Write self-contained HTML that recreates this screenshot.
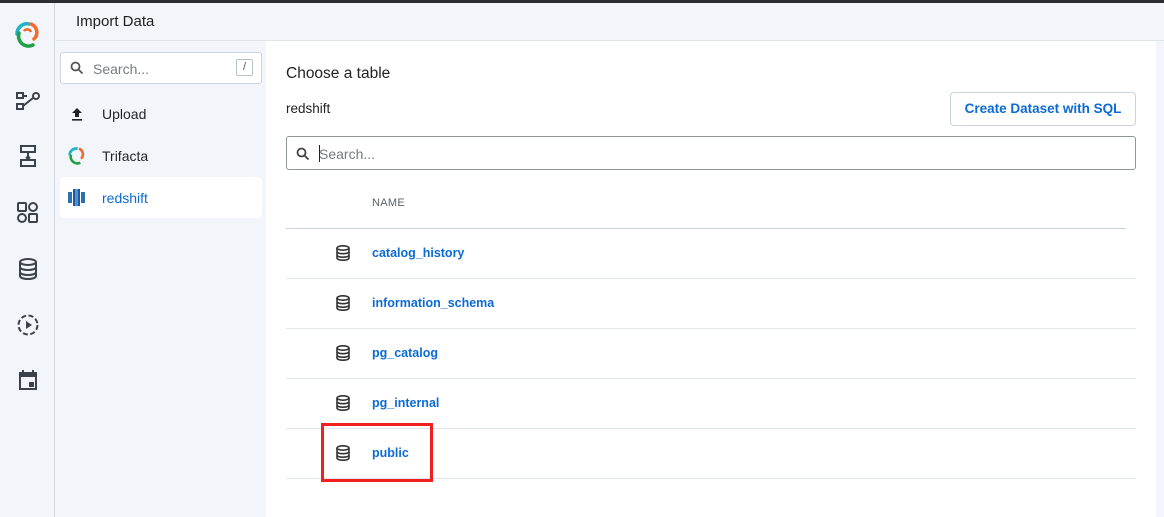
<!DOCTYPE html>
<html><head><meta charset="utf-8"><style>
*{box-sizing:border-box;margin:0;padding:0}
body{width:1164px;height:517px;overflow:hidden;background:#f2f6fa;font-family:"Liberation Sans",sans-serif;position:relative;color:#1f2328}
.a{position:absolute}
.topbar{left:0;top:0;width:1164px;height:3px;background:#2b2f33}
.side{left:0;top:3px;width:55px;height:514px;background:#f2f6fa;border-right:1px solid #d2d8de}
.hdr{left:56px;top:3px;width:1108px;height:38px;border-bottom:1px solid #dde4eb}
.main{left:266px;top:41px;width:890px;height:476px;background:#fff}
.row{left:286px;width:850px;height:50px;border-top:1px solid #dde6ef}
.lnk{color:#0b6bd6;font-weight:bold;font-size:12.5px}
svg{position:absolute}
</style></head><body>
<div class="a topbar"></div>
<div class="a side"></div>
<div class="a hdr"></div>
<div class="a" style="left:76px;top:13px;font-size:15px;color:#222">Import Data</div>
<svg style="left:13px;top:20px" width="30" height="30" viewBox="0 0 30 30">
<path d="M4 14 A10 10 0 0 1 16 4" stroke="#20b3c8" stroke-width="3.5" fill="none" stroke-linecap="round"/>
<path d="M18 4 A9 9 0 0 1 21 19" stroke="#f26a2e" stroke-width="3.5" fill="none" stroke-linecap="round"/>
<path d="M20 25 A10 10 0 0 1 6 13" stroke="#23a047" stroke-width="3.5" fill="none" stroke-linecap="round"/>
<path d="M11 11 A4 4 0 0 1 18 12" stroke="#f26a2e" stroke-width="2.5" fill="none"/>
</svg>
<svg style="left:16px;top:90px" width="24" height="22" viewBox="0 0 24 22" fill="none" stroke="#3c4249" stroke-width="2"><rect x="1" y="3" width="6" height="5"/><rect x="1" y="14" width="6" height="5"/><circle cx="20" cy="6" r="3"/><path d="M7 6h4M7 16l10-8"/></svg>
<svg style="left:19px;top:145px" width="18" height="24" viewBox="0 0 18 24" fill="none" stroke="#3c4249" stroke-width="2"><rect x="2" y="1" width="14" height="6"/><rect x="2" y="15" width="14" height="6"/><path d="M9 8v6M7 12l2 2 2-2"/></svg>
<svg style="left:17px;top:202px" width="22" height="22" viewBox="0 0 22 22" fill="none" stroke="#3c4249" stroke-width="2"><rect x="1" y="1" width="8" height="8" rx="1"/><circle cx="16" cy="5" r="4"/><circle cx="5" cy="16" r="4"/><rect x="12" y="12" width="8" height="8" rx="1"/></svg>
<svg style="left:18px;top:258px" width="20" height="22" viewBox="0 0 20 22" fill="none" stroke="#3c4249" stroke-width="2"><ellipse cx="10" cy="4" rx="8" ry="3"/><path d="M2 4v14c0 2 4 3 8 3s8-1 8-3V4M2 9c0 2 4 3 8 3s8-1 8-3M2 14c0 2 4 3 8 3s8-1 8-3"/></svg>
<svg style="left:17px;top:314px" width="22" height="22" viewBox="0 0 22 22"><circle cx="11" cy="11" r="9.5" fill="none" stroke="#3c4249" stroke-width="2" stroke-dasharray="5 2.5"/><path d="M9 7l6 4-6 4z" fill="#3c4249"/></svg>
<svg style="left:19px;top:370px" width="18" height="20" viewBox="0 0 18 20"><path d="M4 0v3M14 0v3" stroke="#3c4249" stroke-width="2"/><rect x="1" y="3" width="16" height="16" fill="none" stroke="#3c4249" stroke-width="2"/><rect x="1" y="3" width="16" height="4" fill="#3c4249"/><rect x="10" y="12" width="5" height="5" fill="#3c4249"/></svg>
<div class="a" style="left:60px;top:52px;width:202px;height:32px;background:#fff;border:1px solid #cfd6dd;border-radius:3px"></div>
<svg style="left:70px;top:61px" width="14" height="14" viewBox="0 0 14 14" fill="none" stroke="#555" stroke-width="1.8"><circle cx="5.5" cy="5.5" r="4"/><path d="M8.5 8.5l4 4"/></svg>
<div class="a" style="left:93px;top:61px;font-size:14px;color:#757b82">Search...</div>
<div class="a" style="left:236px;top:59px;width:17px;height:17px;border:1px solid #b8c0c8;border-radius:2px;font-size:11px;color:#555;text-align:center;line-height:15px">/</div>
<svg style="left:70px;top:107px" width="14" height="14" viewBox="0 0 14 14"><path d="M7 1L2 6h3v4h4V6h3z M2 12h10v1.6H2z" fill="#1f2328"/></svg>
<div class="a" style="left:102px;top:106px;font-size:14px">Upload</div>
<svg style="left:67px;top:146px" width="20" height="20" viewBox="0 0 30 30"><path d="M4 14 A10 10 0 0 1 16 4" stroke="#20b3c8" stroke-width="4" fill="none"/><path d="M18 4 A9 9 0 0 1 21 19" stroke="#f26a2e" stroke-width="4" fill="none"/><path d="M20 25 A10 10 0 0 1 6 13" stroke="#23a047" stroke-width="4" fill="none"/></svg>
<div class="a" style="left:102px;top:148px;font-size:14px">Trifacta</div>
<div class="a" style="left:60px;top:177px;width:202px;height:41px;background:#fff;border-radius:4px"></div>
<svg style="left:68px;top:189px" width="17" height="17" viewBox="0 0 17 17"><rect x="0" y="3" width="4" height="11" fill="#2c6fb3"/><rect x="5" y="0" width="7" height="17" fill="#1e5a9e"/><rect x="13" y="3" width="4" height="11" fill="#2c6fb3"/><rect x="7" y="0" width="3" height="17" fill="#4f93d6"/></svg>
<div class="a" style="left:102px;top:190px;font-size:14px;color:#0b6bd6">redshift</div>
<div class="a main"></div>
<div class="a" style="left:286px;top:65px;font-size:15.5px;color:#222">Choose a table</div>
<div class="a" style="left:286px;top:101px;font-size:13.5px;color:#222">redshift</div>
<div class="a" style="left:950px;top:92px;width:186px;height:34px;border:1px solid #c9d3dd;border-radius:4px;text-align:center;line-height:32px;font-size:13.5px;color:#0b6bd6;font-weight:bold">Create Dataset with SQL</div>
<div class="a" style="left:286px;top:136px;width:850px;height:34px;border:1px solid #8d969f;border-radius:3px"></div>
<svg style="left:296px;top:147px" width="14" height="14" viewBox="0 0 14 14" fill="none" stroke="#444" stroke-width="1.8"><circle cx="5.5" cy="5.5" r="4"/><path d="M8.5 8.5l4 4"/></svg>
<div class="a" style="left:319px;top:145px;width:1px;height:17px;background:#222"></div>
<div class="a" style="left:319px;top:146px;font-size:14px;color:#757b82">Search...</div>
<div class="a" style="left:372px;top:197px;font-size:11px;color:#5b636b;letter-spacing:.3px">NAME</div>
<div class="a row" style="top:228px;width:840px;border-top-color:#c6d3e0"></div>
<div class="a row" style="top:278px"></div>
<div class="a row" style="top:328px"></div>
<div class="a row" style="top:378px"></div>
<div class="a row" style="top:428px"></div>
<div class="a" style="left:286px;top:478px;width:850px;border-top:1px solid #dde6ef"></div>
<div class="a lnk" style="left:372px;top:246px">catalog_history</div>
<div class="a lnk" style="left:372px;top:296px">information_schema</div>
<div class="a lnk" style="left:372px;top:346px">pg_catalog</div>
<div class="a lnk" style="left:372px;top:396px">pg_internal</div>
<div class="a lnk" style="left:372px;top:446px">public</div>
<svg style="left:336px;top:245px" width="14" height="16" viewBox="0 0 14 16" fill="none" stroke="#333" stroke-width="1.6"><ellipse cx="7" cy="3" rx="6" ry="2.2"/><path d="M1 3v10c0 1.3 2.7 2.2 6 2.2s6-.9 6-2.2V3M1 6.5c0 1.3 2.7 2.2 6 2.2s6-.9 6-2.2M1 10c0 1.3 2.7 2.2 6 2.2s6-.9 6-2.2"/></svg>
<svg style="left:336px;top:295px" width="14" height="16" viewBox="0 0 14 16" fill="none" stroke="#333" stroke-width="1.6"><ellipse cx="7" cy="3" rx="6" ry="2.2"/><path d="M1 3v10c0 1.3 2.7 2.2 6 2.2s6-.9 6-2.2V3M1 6.5c0 1.3 2.7 2.2 6 2.2s6-.9 6-2.2M1 10c0 1.3 2.7 2.2 6 2.2s6-.9 6-2.2"/></svg>
<svg style="left:336px;top:345px" width="14" height="16" viewBox="0 0 14 16" fill="none" stroke="#333" stroke-width="1.6"><ellipse cx="7" cy="3" rx="6" ry="2.2"/><path d="M1 3v10c0 1.3 2.7 2.2 6 2.2s6-.9 6-2.2V3M1 6.5c0 1.3 2.7 2.2 6 2.2s6-.9 6-2.2M1 10c0 1.3 2.7 2.2 6 2.2s6-.9 6-2.2"/></svg>
<svg style="left:336px;top:395px" width="14" height="16" viewBox="0 0 14 16" fill="none" stroke="#333" stroke-width="1.6"><ellipse cx="7" cy="3" rx="6" ry="2.2"/><path d="M1 3v10c0 1.3 2.7 2.2 6 2.2s6-.9 6-2.2V3M1 6.5c0 1.3 2.7 2.2 6 2.2s6-.9 6-2.2M1 10c0 1.3 2.7 2.2 6 2.2s6-.9 6-2.2"/></svg>
<svg style="left:336px;top:445px" width="14" height="16" viewBox="0 0 14 16" fill="none" stroke="#333" stroke-width="1.6"><ellipse cx="7" cy="3" rx="6" ry="2.2"/><path d="M1 3v10c0 1.3 2.7 2.2 6 2.2s6-.9 6-2.2V3M1 6.5c0 1.3 2.7 2.2 6 2.2s6-.9 6-2.2M1 10c0 1.3 2.7 2.2 6 2.2s6-.9 6-2.2"/></svg>
<div class="a" style="left:321px;top:423px;width:112px;height:59px;border:3px solid #f0201e"></div>
</body></html>
